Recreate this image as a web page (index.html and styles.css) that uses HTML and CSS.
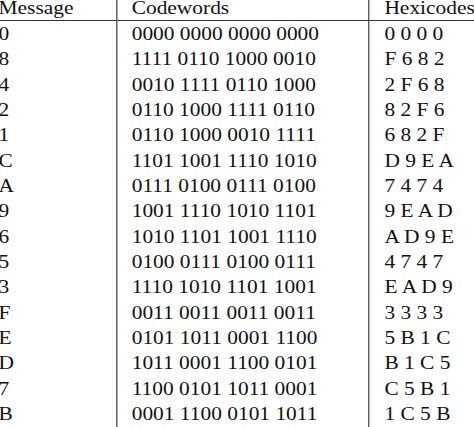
FILE: index.html
```html
<!DOCTYPE html>
<html>
<head>
<meta charset="utf-8">
<link rel="stylesheet" href="styles.css">
</head>
<body>
<div class="sheet">
<table class="codes">
<colgroup><col class="c-msg"><col class="c-code"><col class="c-hex"></colgroup>
<thead>
<tr><th>Message</th><th>Codewords</th><th>Hexicodes</th></tr>
</thead>
<tbody>
<tr><td>0</td><td>0000 0000 0000 0000</td><td>0 0 0 0</td></tr>
<tr><td>8</td><td>1111 0110 1000 0010</td><td>F 6 8 2</td></tr>
<tr><td>4</td><td>0010 1111 0110 1000</td><td>2 F 6 8</td></tr>
<tr><td>2</td><td>0110 1000 1111 0110</td><td>8 2 F 6</td></tr>
<tr><td>1</td><td>0110 1000 0010 1111</td><td>6 8 2 F</td></tr>
<tr><td>C</td><td>1101 1001 1110 1010</td><td>D 9 E A</td></tr>
<tr><td>A</td><td>0111 0100 0111 0100</td><td>7 4 7 4</td></tr>
<tr><td>9</td><td>1001 1110 1010 1101</td><td>9 E A D</td></tr>
<tr><td>6</td><td>1010 1101 1001 1110</td><td>A D 9 E</td></tr>
<tr><td>5</td><td>0100 0111 0100 0111</td><td>4 7 4 7</td></tr>
<tr><td>3</td><td>1110 1010 1101 1001</td><td>E A D 9</td></tr>
<tr><td>F</td><td>0011 0011 0011 0011</td><td>3 3 3 3</td></tr>
<tr><td>E</td><td>0101 1011 0001 1100</td><td>5 B 1 C</td></tr>
<tr><td>D</td><td>1011 0001 1100 0101</td><td>B 1 C 5</td></tr>
<tr><td>7</td><td>1100 0101 1011 0001</td><td>C 5 B 1</td></tr>
<tr><td>B</td><td>0001 1100 0101 1011</td><td>1 C 5 B</td></tr>
</tbody>
</table>
</div>
</body>
</html>
```

FILE: styles.css
```css
html, body {
  margin: 0;
  padding: 0;
  background: #ffffff;
  overflow: hidden;
}

.sheet {
  width: 416px;
  transform: scaleX(1.14);
  transform-origin: 0 0;
}

.codes {
  font-family: "Liberation Serif", "Times New Roman", serif;
  font-size: 18.8px;
  color: #111111;
  border-collapse: collapse;
  table-layout: fixed;
  width: calc(100% + 1.3px);
  margin-left: -1.3px;
}

.c-msg { width: 104px; }
.c-code { width: 221px; }
.c-hex { width: auto; }

.codes th,
.codes td {
  text-align: left;
  font-weight: normal;
  white-space: nowrap;
  padding: 0;
  vertical-align: top;
}

.codes th {
  line-height: 15px;
  height: 15px;
  padding-bottom: 5px;
  border-bottom: 1px solid #333333;
}

.codes td {
  line-height: 25.35px;
  height: 25.35px;
}

.codes th + th,
.codes td + td {
  border-left: 1px solid #333333;
  padding-left: 12.3px;
}

.codes th:nth-child(3),
.codes td:nth-child(3) {
  padding-left: 13px;
}
```
